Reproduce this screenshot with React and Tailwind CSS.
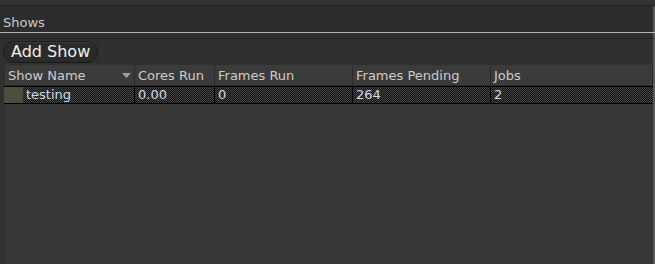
export default function App() {
  const cols = [
    { name: "Show Name", w: "w-[130px]", sort: true },
    { name: "Cores Run", w: "w-[80px]" },
    { name: "Frames Run", w: "w-[138px]" },
    { name: "Frames Pending", w: "w-[138px]" },
    { name: "Jobs", w: "flex-1" },
  ];
  const row = ["testing", "0.00", "0", "264", "2"];
  return (
    <div className="w-[655px] h-[264px] bg-[#353535] flex flex-col overflow-hidden font-['DejaVu_Sans',sans-serif]">
      <div className="h-[6px] bg-[#323232] border-b border-[#222]" />
      <div className="h-[26px] bg-[#2c2c2c] flex items-center pt-[7px] pl-[3px] text-[13px] text-[#c8c8c8] border-r-2 border-[#5a5a5a]">
        Shows
      </div>
      <div className="h-px bg-[#b4b4b4]" />
      <div className="h-[6px] bg-[#303030] border-b border-[#242424] border-r-2 border-r-[#5a5a5a]" />
      <div className="flex-1 flex flex-col bg-[#303030] border-r-2 border-[#5a5a5a]">
        <div className="h-[26px] flex items-center pl-[3px]">
          <div className="h-[22px] px-[7px] rounded-full bg-[#2a2a2a] border border-[#1a1a1a] shadow-[inset_0_1px_0_#3a3a3a] flex items-center text-[16px] text-[#f0f0f0]">
            Add Show
          </div>
        </div>
        <div className="flex-1 ml-[5px] bg-[#363636] flex flex-col">
          <div className="h-[21px] flex bg-[#3b3b3b] border-b border-[#2a2a2a]">
            {cols.map((c) => (
              <div
                key={c.name}
                className={`${c.w} shrink-0 flex items-center pl-[3px] pt-[1px] text-[13px] text-[#cccccc] border-r border-[#2a2a2a] relative`}
              >
                {c.name}
                {c.sort && (
                  <svg className="absolute right-[3px] top-[8px]" width="9" height="5" viewBox="0 0 9 5">
                    <path d="M0 0H9L4.5 5Z" fill="#a0a0a0" />
                  </svg>
                )}
              </div>
            ))}
          </div>
          <div className="h-[18px] flex border-y border-black -ml-[1px]">
            <div className="w-[19px] shrink-0 bg-[#4b4d3d]" />
            <div className="flex-1 flex bg-[repeating-conic-gradient(#111_0_25%,#474747_0_50%)] bg-[length:2px_2px]">
              {row.map((v, i) => (
                <div
                  key={i}
                  className={`${i === 0 ? "w-[112px]" : cols[i].w} shrink-0 flex items-center pl-[3px] text-[13px] text-[#cfdcea] ${i < 4 ? "border-r border-black" : ""}`}
                >
                  {v}
                </div>
              ))}
            </div>
          </div>
        </div>
      </div>
    </div>
  );
}
